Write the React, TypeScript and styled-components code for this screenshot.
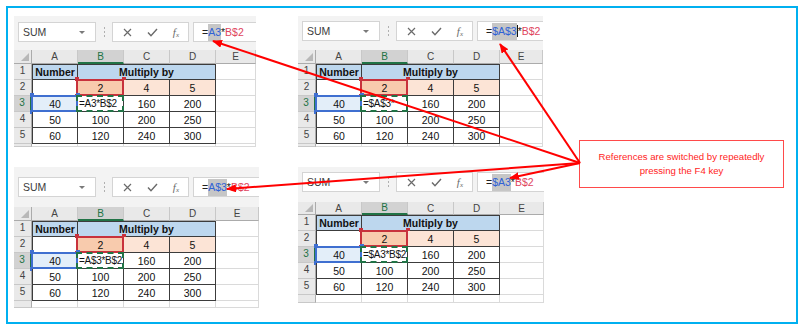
import React from 'react';
import styled, { createGlobalStyle } from 'styled-components';

const GlobalStyle = createGlobalStyle`
  body {
    margin: 0;
    background: #ffffff;
    font-family: 'Liberation Sans', Arial, sans-serif;
  }
`;

const Page = styled.div`
  position: relative;
  width: 803px;
  height: 331px;
  overflow: hidden;
`;

const Frame = styled.div`
  box-sizing: border-box;
  margin: 6px 0 0 6px;
  width: 792px;
  height: 318px;
  border: 2px solid #00b0f0;
  padding: 8px 0 0 6px;
  display: flex;
  align-items: flex-start;
`;

const Shots = styled.div`
  display: grid;
  grid-template-columns: 245px 245px;
  grid-template-rows: 131px auto;
  column-gap: 39px;
  row-gap: 20px;
  align-items: start;
`;

const Callout = styled.div`
  box-sizing: border-box;
  margin: 124px 0 0 36px;
  width: 205px;
  height: 48px;
  border: 1px solid #ff4a4a;
  display: flex;
  flex-direction: column;
  align-items: center;
  justify-content: center;
  color: #ff2424;
  font-size: 9.6px;
  line-height: 14px;
`;

/* ---------- excel screenshot ---------- */

const Shot = styled.div<{ $w: number }>`
  width: ${(p) => p.$w}px;
  overflow: hidden;
  background: #ffffff;
`;

const Bar = styled.div<{ $h: number; $pt: number }>`
  box-sizing: border-box;
  height: ${(p) => p.$h}px;
  padding: ${(p) => p.$pt}px 0 0 4px;
  background: #f3f3f3;
  display: flex;
  align-items: flex-start;
`;

const Box = styled.div`
  box-sizing: border-box;
  height: 20px;
  background: #ffffff;
  border: 1px solid #d4d4d4;
  display: flex;
  align-items: center;
  font-size: 10.5px;
`;

const NameBox = styled(Box)`
  width: 78px;
  justify-content: space-between;
  padding: 0 10px 0 4px;
  color: #3c3c3c;
`;

const DropArrow = styled.span`
  width: 0;
  height: 0;
  border-left: 3px solid transparent;
  border-right: 3px solid transparent;
  border-top: 3px solid #7a7a7a;
`;

const Dots = styled.div`
  width: 16px;
  height: 20px;
  display: flex;
  flex-direction: column;
  align-items: center;
  justify-content: center;
  gap: 2px;
  span {
    width: 1px;
    height: 2px;
    background: #b0b0b0;
  }
`;

const FuncBox = styled(Box)`
  width: 77px;
  justify-content: space-between;
  padding: 0 9px 0 10px;
  color: #6a6a6a;
`;

const Fx = styled.span`
  font-family: 'Liberation Serif', 'Times New Roman', serif;
  font-style: italic;
  font-size: 11px;
  color: #6a6a6a;
  sub {
    font-size: 7px;
    vertical-align: -1px;
  }
`;

const FormulaBox = styled(Box)`
  flex: 1;
  margin-left: 4px;
  padding-left: 8px;
  white-space: nowrap;
  overflow: hidden;
  border-right: none;
  color: #222;
`;

const Part = styled.span<{ $color?: string; $sel?: boolean }>`
  color: ${(p) => p.$color || '#222'};
  background: ${(p) => (p.$sel ? '#c6c6c6' : 'transparent')};
  line-height: 17px;
`;

const Caret = styled.span`
  display: inline-block;
  width: 1px;
  height: 12px;
  background: #111;
  vertical-align: -2px;
`;

const Sheet = styled.div<{ $tail: number; $head: number }>`
  display: grid;
  grid-template-columns: 18px 46px 46px 46px 46px 1fr;
  grid-template-rows: ${(p) => p.$head}px repeat(5, 16px) ${(p) => p.$tail}px;
  font-size: 10.5px;
  color: #111;
`;

const HeadBase = styled.div`
  box-sizing: border-box;
  display: flex;
  align-items: center;
  justify-content: center;
  overflow: hidden;
  background: #e9e9e9;
  color: #444;
  font-size: 10px;
`;

const CornerHead = styled(HeadBase)`
  position: relative;
  border-right: 1px solid #ababab;
  border-bottom: 1px solid #ababab;
  &::after {
    content: '';
    position: absolute;
    right: 2px;
    bottom: 2px;
    width: 8px;
    height: 8px;
    background: #b8b8b8;
    clip-path: polygon(100% 0, 100% 100%, 0 100%);
  }
`;

const ColHead = styled(HeadBase)<{ $sel?: boolean }>`
  border-right: 1px solid #c8c8c8;
  border-bottom: ${(p) => (p.$sel ? '2px solid #217346' : '1px solid #ababab')};
  background: ${(p) => (p.$sel ? '#d2d2d2' : '#e9e9e9')};
  color: ${(p) => (p.$sel ? '#217346' : '#444')};
`;

const RowHead = styled(HeadBase)<{ $sel?: boolean }>`
  border-bottom: 1px solid #c8c8c8;
  border-right: ${(p) => (p.$sel ? '2px solid #217346' : '1px solid #ababab')};
  background: ${(p) => (p.$sel ? '#d2d2d2' : '#e9e9e9')};
  color: ${(p) => (p.$sel ? '#217346' : '#444')};
  align-items: flex-start;
  padding-top: 1px;
`;

const Cell = styled.div<{
  $table?: boolean;
  $top?: boolean;
  $left?: boolean;
  $bg?: string;
  $bold?: boolean;
  $span?: number;
  $start?: boolean;
}>`
  position: relative;
  box-sizing: border-box;
  grid-column: span ${(p) => p.$span || 1};
  display: flex;
  align-items: center;
  justify-content: ${(p) => (p.$start ? 'flex-start' : 'center')};
  padding-left: ${(p) => (p.$start ? '1px' : '0')};
  font-size: ${(p) => (p.$start ? '10px' : '10.5px')};
  letter-spacing: ${(p) => (p.$start ? '-0.3px' : 'normal')};
  white-space: nowrap;
  background: ${(p) => p.$bg || '#ffffff'};
  font-weight: ${(p) => (p.$bold ? 700 : 400)};
  border-right: 1px solid ${(p) => (p.$table ? '#3c3c3c' : '#dadada')};
  border-bottom: 1px solid ${(p) => (p.$table ? '#3c3c3c' : '#dadada')};
  border-top: ${(p) => (p.$top ? '1px solid #3c3c3c' : 'none')};
  border-left: ${(p) => (p.$left ? '1px solid #3c3c3c' : 'none')};
`;

const Mark = styled.span<{ $color: string; $dashed?: boolean }>`
  position: absolute;
  inset: -1px -1px -1px -2px;
  border: 2px ${(p) => (p.$dashed ? 'dashed' : 'solid')} ${(p) => p.$color};
  pointer-events: none;
`;

const Knob = styled.span<{ $color: string; $pos: string }>`
  position: absolute;
  width: 4px;
  height: 4px;
  background: ${(p) => p.$color};
  ${(p) => (p.$pos.includes('t') ? 'top: -3px;' : 'bottom: -3px;')}
  ${(p) => (p.$pos.includes('l') ? 'left: -3px;' : 'right: -3px;')}
`;

/* ---------- arrows ---------- */

const Overlay = styled.svg`
  position: absolute;
  left: 0;
  top: 0;
  pointer-events: none;
`;

interface IPart {
  text: string;
  color?: string;
  sel?: boolean;
  caret?: boolean;
}

interface IShot {
  width: number;
  barHeight: number;
  barTop: number;
  head: number;
  tail: number;
  formula: IPart[];
  cell: string;
}

const BLUE = '#2f62d6';
const RED = '#e0445e';

const shots: IShot[] = [
  {
    width: 242,
    barHeight: 34,
    barTop: 6,
    head: 14,
    tail: 3,
    formula: [
      { text: '=' },
      { text: 'A3', color: BLUE, sel: true },
      { text: '*' },
      { text: 'B$2', color: RED },
    ],
    cell: '=A3*B$2',
  },
  {
    width: 245,
    barHeight: 34,
    barTop: 5,
    head: 14,
    tail: 3,
    formula: [
      { text: '=' },
      { text: '$A$3', color: BLUE, sel: true },
      { text: '', caret: true },
      { text: '*' },
      { text: 'B$2', color: RED },
    ],
    cell: '=$A$3*',
  },
  {
    width: 245,
    barHeight: 40,
    barTop: 10,
    head: 14,
    tail: 7,
    formula: [
      { text: '=' },
      { text: 'A$3', color: BLUE, sel: true },
      { text: '*' },
      { text: 'B$2', color: RED },
    ],
    cell: '=A$3*B$2',
  },
  {
    width: 246,
    barHeight: 35,
    barTop: 5,
    head: 13,
    tail: 8,
    formula: [
      { text: '=' },
      { text: '$A3', color: BLUE, sel: true },
      { text: '*' },
      { text: 'B$2', color: RED },
    ],
    cell: '=$A3*B$2',
  },
];

const bodyRows = [
  ['50', '100', '200', '250'],
  ['60', '120', '240', '300'],
];

function Knobs({ color, corners }: { color: string; corners: string[] }) {
  return (
    <>
      {corners.map((c) => (
        <Knob key={c} $color={color} $pos={c} />
      ))}
    </>
  );
}

function ExcelShot({ shot }: { shot: IShot }) {
  return (
    <Shot $w={shot.width}>
      <Bar $h={shot.barHeight} $pt={shot.barTop}>
        <NameBox>
          SUM
          <DropArrow />
        </NameBox>
        <Dots>
          <span />
          <span />
          <span />
        </Dots>
        <FuncBox>
          <svg width='9' height='9' viewBox='0 0 9 9'>
            <path d='M1 1 L8 8 M8 1 L1 8' stroke='#6a6a6a' strokeWidth='1.2' />
          </svg>
          <svg width='11' height='9' viewBox='0 0 11 9'>
            <path d='M1 4.5 L4 7.8 L10 1' stroke='#6a6a6a' strokeWidth='1.4' fill='none' />
          </svg>
          <Fx>
            f<sub>x</sub>
          </Fx>
        </FuncBox>
        <FormulaBox>
          {shot.formula.map((p, i) =>
            p.caret ? (
              <Caret key={i} />
            ) : (
              <Part key={i} $color={p.color} $sel={p.sel}>
                {p.text}
              </Part>
            )
          )}
        </FormulaBox>
      </Bar>
      <Sheet $head={shot.head} $tail={shot.tail}>
        <CornerHead />
        <ColHead>A</ColHead>
        <ColHead $sel>B</ColHead>
        <ColHead>C</ColHead>
        <ColHead>D</ColHead>
        <ColHead>E</ColHead>

        <RowHead>1</RowHead>
        <Cell $table $top $left $bold $bg='#bdd7ee'>
          Number
        </Cell>
        <Cell $table $top $bold $span={3} $bg='#bdd7ee'>
          Multiply by
        </Cell>
        <Cell />

        <RowHead>2</RowHead>
        <Cell $table $left />
        <Cell $table $bg='#f8cbad'>
          2
          <Mark $color='#c8323c' />
          <Knobs color='#c8323c' corners={['tl', 'tr', 'bl', 'br']} />
        </Cell>
        <Cell $table $bg='#fce4d6'>
          4
        </Cell>
        <Cell $table $bg='#fce4d6'>
          5
        </Cell>
        <Cell />

        <RowHead $sel>3</RowHead>
        <Cell $table $left $bg='#e3eef9'>
          40
          <Mark $color='#3f6fd0' />
          <Knobs color='#3f6fd0' corners={['tl', 'tr', 'bl', 'br']} />
        </Cell>
        <Cell $table $start>
          {shot.cell}
          <Mark $color='#217346' $dashed />
          <Knobs color='#217346' corners={['br']} />
        </Cell>
        <Cell $table>160</Cell>
        <Cell $table>200</Cell>
        <Cell />

        {bodyRows.map((row, r) => (
          <React.Fragment key={r}>
            <RowHead>{r + 4}</RowHead>
            {row.map((v, c) => (
              <Cell key={c} $table $left={c === 0}>
                {v}
              </Cell>
            ))}
            <Cell />
          </React.Fragment>
        ))}

        <RowHead />
        <Cell />
        <Cell />
        <Cell />
        <Cell />
        <Cell />
      </Sheet>
    </Shot>
  );
}

const ORIGIN = { x: 580, y: 163 };
const tips = [
  { x: 213, y: 41 },
  { x: 500, y: 44 },
  { x: 227, y: 189 },
  { x: 510, y: 178 },
];

function App() {
  return (
    <Page>
      <GlobalStyle />
      <Frame>
        <Shots>
          {shots.map((s, i) => (
            <ExcelShot key={i} shot={s} />
          ))}
        </Shots>
        <Callout>
          <div>References are switched by repeatedly</div>
          <div>pressing the F4 key</div>
        </Callout>
      </Frame>
      <Overlay width='803' height='331' viewBox='0 0 803 331'>
        <defs>
          <marker
            id='head'
            markerUnits='userSpaceOnUse'
            markerWidth='10'
            markerHeight='8'
            refX='9'
            refY='4'
            orient='auto'
          >
            <path d='M0 0 L10 4 L0 8 Z' fill='#ff0000' />
          </marker>
        </defs>
        {tips.map((t, i) => (
          <line
            key={i}
            x1={ORIGIN.x}
            y1={ORIGIN.y}
            x2={t.x}
            y2={t.y}
            stroke='#ff0000'
            strokeWidth='2'
            markerEnd='url(#head)'
          />
        ))}
      </Overlay>
    </Page>
  );
}

export default App;
